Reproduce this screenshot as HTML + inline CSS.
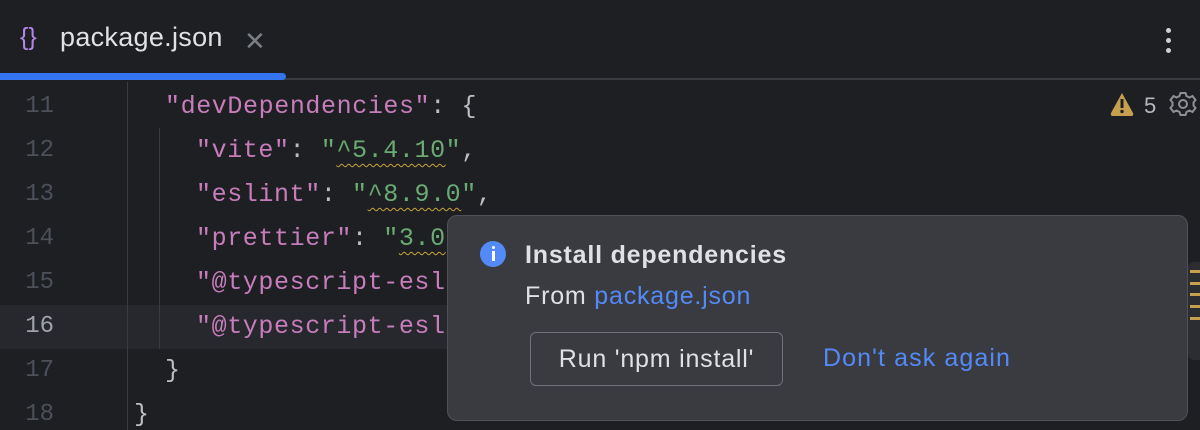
<!DOCTYPE html>
<html><head><style>
body{margin:0;width:1200px;height:430px;background:#1e1f22;overflow:hidden;position:relative;font-family:"Liberation Sans",sans-serif}
.tabbar{position:absolute;left:0;top:0;width:1200px;height:80px;border-bottom:2px solid #393b40;box-sizing:border-box}
.ul{position:absolute;left:0;top:73px;width:286px;height:7px;background:#3574f0;border-radius:0 4px 4px 0}
.ln{position:absolute;left:0;width:54px;text-align:right;color:#4b5059;font:24px "Liberation Mono",monospace}
.code{position:absolute;font:25px "Liberation Mono",monospace;letter-spacing:0.6px;color:#bcbec4;white-space:pre}
.k{color:#c77dbb}.s{color:#6aab73}
.w{text-decoration:underline wavy #c9a43c;text-decoration-thickness:1px;text-underline-offset:6px}
.pop{position:absolute;left:447px;top:215px;width:741px;height:206px;background:#393b40;border:1px solid #4e5157;border-radius:10px;box-sizing:border-box}
.pt{position:absolute;white-space:nowrap;letter-spacing:0.8px}
</style></head><body>
<div class="tabbar"></div>
<div style="position:absolute;left:20px;top:23px;color:#b287e8;font-size:25px">{}</div>
<div style="position:absolute;left:60px;top:22px;color:#dfe1e5;font-size:27px;letter-spacing:0.3px">package.json</div>
<div style="position:absolute;left:244px;top:26px;color:#7a7e85;font-size:26px">✕</div>
<div class="ul"></div>
<div style="position:absolute;left:1166px;top:28px;width:5px;height:5px;border-radius:3px;background:#ced0d6;box-shadow:0 10px 0 #ced0d6,0 20px 0 #ced0d6"></div>
<div style="position:absolute;left:0;top:305px;width:1200px;height:44px;background:#26282e"></div>
<div style="position:absolute;left:127px;top:82px;width:1px;height:348px;background:#393b40"></div>
<div style="position:absolute;left:159px;top:128px;width:1px;height:221px;background:#393b40"></div>
<div class="ln" style="top:93px">11</div>
<div class="ln" style="top:137px">12</div>
<div class="ln" style="top:181px">13</div>
<div class="ln" style="top:225px">14</div>
<div class="ln" style="top:269px">15</div>
<div class="ln" style="top:313px;color:#a1a3ab">16</div>
<div class="ln" style="top:357px">17</div>
<div class="ln" style="top:401px">18</div>
<div class="code" style="left:165px;top:92px"><span class="k">"devDependencies"</span>: {</div>
<div class="code" style="left:196px;top:136px"><span class="k">"vite"</span>: <span class="s">"<span class="w">^5.4.10</span>"</span>,</div>
<div class="code" style="left:196px;top:180px"><span class="k">"eslint"</span>: <span class="s">"<span class="w">^8.9.0</span>"</span>,</div>
<div class="code" style="left:196px;top:224px"><span class="k">"prettier"</span>: <span class="s">"<span class="w">3.0</span></span></div>
<div class="code" style="left:196px;top:268px"><span class="k">"@typescript-esli</span></div>
<div class="code" style="left:196px;top:312px"><span class="k">"@typescript-esli</span></div>
<div class="code" style="left:165px;top:356px">}</div>
<div class="code" style="left:134px;top:400px">}</div>
<svg style="position:absolute;left:1110px;top:90px" width="90" height="30">
<path d="M12 3 L23 23 Q24 26 21 26 L3 26 Q0 26 1 23 Z" fill="#c6a04e"/>
<rect x="10.5" y="9" width="3" height="9" fill="#1e1f22"/><circle cx="12" cy="21.5" r="1.7" fill="#1e1f22"/>
<text x="34" y="23" fill="#b4b8bf" font-family="Liberation Sans" font-size="22">5</text>
<g transform="translate(73 14)" fill="none" stroke="#8c8f96" stroke-width="2">
<circle r="4"/><path d="M-2.5-11h5l1 3 3 1.5 3-1.5 3 4-2 2.5v3l2 2.5-3 4-3-1.5-3 1.5-1 3h-5l-1-3-3-1.5-3 1.5-3-4 2-2.5v-3l-2-2.5 3-4 3 1.5 3-1.5z"/></g>
</svg>
<div style="position:absolute;left:1188px;top:262px;width:12px;height:98px;background:#2b2d30;border-radius:6px 0 0 6px"></div>
<div style="position:absolute;left:1190px;top:270px;width:10px;height:3px;background:#c6a04e;box-shadow:0 12px 0 #c6a04e,0 23px 0 #c6a04e,0 35px 0 #c6a04e,0 47px 0 #c6a04e"></div>
<div class="pop">
<div style="position:absolute;left:32px;top:25px;width:26px;height:26px;border-radius:13px;background:#548af7"></div>
<div style="position:absolute;left:43.5px;top:30px;width:3px;height:3px;background:#fff;border-radius:2px"></div>
<div style="position:absolute;left:43.5px;top:35px;width:3px;height:10px;background:#fff"></div>
<div class="pt" style="left:77px;top:25px;color:#dfe1e5;font-size:25px;font-weight:bold">Install dependencies</div>
<div class="pt" style="left:77px;top:66px;color:#dfe1e5;font-size:25px">From <span style="color:#548af7">package.json</span></div>
<div style="position:absolute;left:82px;top:116px;width:253px;height:54px;border:1px solid #6f737a;border-radius:6px;box-sizing:border-box;color:#dfe1e5;font-size:25px;letter-spacing:0.8px;text-align:center;line-height:52px;white-space:nowrap">Run 'npm install'</div>
<div class="pt" style="left:375px;top:128px;color:#548af7;font-size:25px;letter-spacing:1.1px">Don't ask again</div>
</div>
</body></html>
